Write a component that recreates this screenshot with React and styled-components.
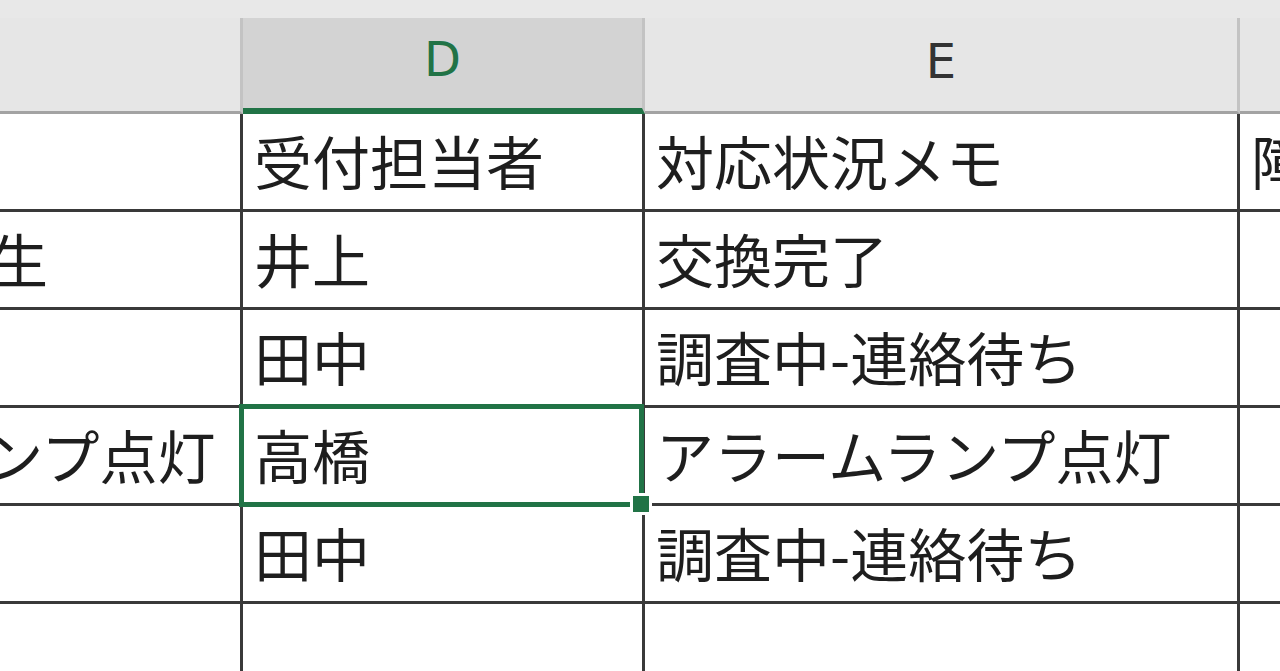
import styled, { createGlobalStyle } from "styled-components";

const GlobalStyle = createGlobalStyle`
  html, body {
    margin: 0;
    padding: 0;
    background: #ffffff;
    overflow: hidden;
  }
`;

// visible slice of the sheet: the view is scrolled so column C is cut off
const columns = [
  { key: "C", width: 554 },
  { key: "D", width: 402 },
  { key: "E", width: 595 },
  { key: "F", width: 400 },
];

const rows = [
  ["", "受付担当者", "対応状況メモ", "障害内容"],
  ["電源異常発生", "井上", "交換完了", ""],
  ["", "田中", "調査中-連絡待ち", ""],
  ["アラームランプ点灯", "高橋", "アラームランプ点灯", ""],
  ["", "田中", "調査中-連絡待ち", ""],
  ["", "", "", ""],
];

const activeCol = 1;
const activeRow = 3;

const App = () => {
  return (
    <>
      <GlobalStyle />
      <Viewport>
        <TopStrip />
        <Sheet $cols={columns.map((c) => `${c.width}px`).join(" ")}>
          {columns.map((c, i) => (
            <ColHeader key={c.key} $active={i === activeCol}>
              {c.key === "C" || c.key === "F" ? "" : c.key}
            </ColHeader>
          ))}
          {rows.map((row, r) =>
            row.map((text, c) => (
              <Cell key={`${r}-${c}`}>
                {text}
                {r === activeRow && c === activeCol && (
                  <Selection>
                    <FillHandle />
                  </Selection>
                )}
              </Cell>
            ))
          )}
        </Sheet>
      </Viewport>
    </>
  );
};

const Viewport = styled.div`
  width: 1280px;
  height: 671px;
  overflow: hidden;
  background: #ffffff;
`;

const TopStrip = styled.div`
  height: 18px;
  background: #e8e8e8;
`;

const Sheet = styled.div`
  display: grid;
  grid-template-columns: ${({ $cols }) => $cols};
  grid-template-rows: 96px repeat(6, 98px);
  margin-left: -311px;
  width: max-content;
`;

const ColHeader = styled.div`
  box-sizing: border-box;
  display: flex;
  align-items: center;
  justify-content: center;
  padding-bottom: 8px;
  background: ${({ $active }) => ($active ? "#d3d3d3" : "#e6e6e6")};
  border-right: 3px solid #c3c3c3;
  border-bottom: ${({ $active }) =>
    $active ? "6px solid #217346" : "3px solid #a3a3a3"};
  color: ${({ $active }) => ($active ? "#217346" : "#333333")};
  font-family: "DejaVu Sans", "Noto Sans", sans-serif;
  font-size: 48px;
  line-height: 1;
`;

const Cell = styled.div`
  position: relative;
  box-sizing: border-box;
  display: flex;
  align-items: center;
  padding: 0 11px 4px;
  border-right: 3px solid #393939;
  border-bottom: 3px solid #393939;
  white-space: nowrap;
  color: #1e1e1e;
  font-family: "Noto Sans CJK JP", "Noto Sans", sans-serif;
  font-size: 58px;
  line-height: 1;
`;

const Selection = styled.div`
  position: absolute;
  top: -4px;
  left: -4px;
  right: -2px;
  bottom: -4px;
  border: 5px solid #217346;
  pointer-events: none;
  z-index: 2;
`;

const FillHandle = styled.div`
  position: absolute;
  right: -13px;
  bottom: -13px;
  width: 16px;
  height: 16px;
  background: #217346;
  border: 3px solid #ffffff;
`;

export default App;
